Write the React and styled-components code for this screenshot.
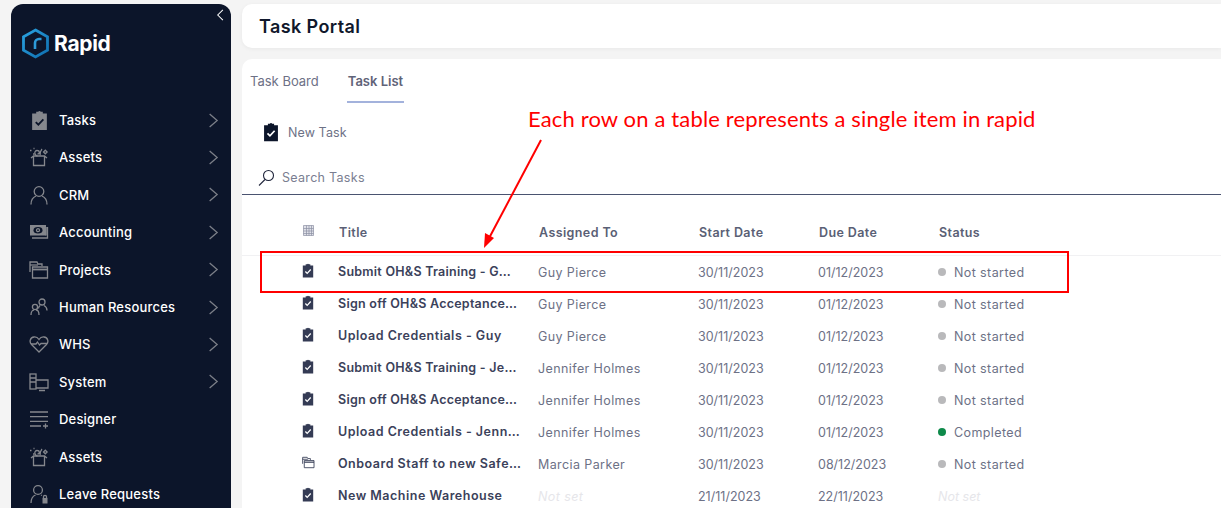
import React from "react";
import styled, { createGlobalStyle } from "styled-components";

const GlobalStyle = createGlobalStyle`
  html, body {
    margin: 0;
    height: 508px;
    overflow: hidden;
    background: #f4f4f4;
    font-family: "Inter", "Noto Sans", sans-serif;
  }
`;

const Page = styled.div`
  position: relative;
  display: flex;
  gap: 11px;
  width: 1221px;
  height: 508px;
  padding: 4px 0 0 11px;
  box-sizing: border-box;
  overflow: hidden;
`;

const Sidebar = styled.aside`
  position: relative;
  flex: 0 0 220px;
  height: 520px;
  background: #0c152a;
  border-radius: 12px 12px 0 0;
  box-sizing: border-box;
  padding: 24px 0 0 11px;
`;

const CollapseButton = styled.div`
  position: absolute;
  top: 5px;
  right: 6px;
  color: #ffffff;
  display: flex;
`;

const Logo = styled.div`
  display: flex;
  align-items: center;
  gap: 5px;
  height: 30px;
  color: #ffffff;
  font-size: 21px;
  font-weight: 700;
  letter-spacing: -0.3px;
`;

const Menu = styled.nav`
  display: flex;
  flex-direction: column;
  margin-top: 43.4px;
`;

const MenuItem = styled.div`
  display: flex;
  align-items: center;
  height: 37.4px;
  color: #ffffff;
  font-size: 13px;
  font-weight: 500;
  letter-spacing: 0.2px;
`;

const MenuIcon = styled.span`
  display: flex;
  justify-content: center;
  flex: 0 0 36px;
  margin-left: -1px;
  margin-right: 2px;
  color: #85878d;
`;

const MenuLabel = styled.span`
  flex: 1;
`;

const MenuArrow = styled.span`
  display: flex;
  margin-right: 12px;
  color: #7c7f88;
`;

const Main = styled.main`
  flex: 1;
  display: flex;
  flex-direction: column;
  gap: 11px;
  min-width: 0;
`;

const Header = styled.header`
  flex: 0 0 44px;
  display: flex;
  align-items: center;
  padding-left: 17px;
  background: #ffffff;
  border-radius: 10px 0 0 10px;
  box-shadow: 0 1px 4px rgba(0, 0, 0, 0.05);
`;

const Title = styled.h1`
  margin: 0;
  font-size: 18px;
  font-weight: 600;
  letter-spacing: 0.4px;
  color: #10182c;
`;

const Card = styled.section`
  flex: 1;
  background: #ffffff;
  border-radius: 10px 0 0 0;
`;

const Tabs = styled.div`
  display: flex;
  gap: 28px;
  height: 44px;
  padding-left: 8px;
`;

const Tab = styled.div`
  height: 44px;
  box-sizing: border-box;
  padding: 14px ${(p) => (p.$active ? "1px" : "0")} 0;
  font-size: 13px;
  line-height: 16px;
  font-weight: ${(p) => (p.$active ? 600 : 400)};
  color: ${(p) => (p.$active ? "#5f6378" : "#6d7186")};
  border-bottom: 2px solid ${(p) => (p.$active ? "#a3b2dc" : "transparent")};
`;

const NewTask = styled.div`
  display: flex;
  align-items: center;
  gap: 9px;
  height: 30px;
  margin-top: 14px;
  padding-left: 21px;
  font-size: 12.5px;
  letter-spacing: 0.1px;
  color: #6d7186;
`;

const Search = styled.div`
  display: flex;
  align-items: center;
  gap: 7px;
  height: 34px;
  margin-top: 14px;
  padding: 0 0 1px 16px;
  box-sizing: border-box;
  font-size: 12.5px;
  letter-spacing: 0.3px;
  color: #7a7e91;
  border-bottom: 1px solid #4a5370;
`;

const Table = styled.div`
  margin-top: 18px;
`;

const HeadRow = styled.div`
  display: grid;
  grid-template-columns: 97px 200px 160px 120px 120px 1fr;
  align-items: center;
  height: 43px;
  padding-bottom: 4px;
  box-sizing: border-box;
  font-size: 12.5px;
  font-weight: 600;
  letter-spacing: 0.4px;
  color: #5a5f75;
  border-bottom: 1px solid #f1f1f3;
`;

const Row = styled.div`
  display: grid;
  grid-template-columns: 96px 200px 160px 120px 120px 1fr;
  align-items: center;
  height: 32px;
  font-size: 12.5px;
  color: #6d7186;
`;

const IconCell = styled.div`
  display: flex;
  justify-content: center;
  padding-left: 36px;
  padding-bottom: 3px;
  color: #343b54;
`;

const ItemTitle = styled.div`
  white-space: nowrap;
  font-weight: 600;
  letter-spacing: ${(p) => (p.$tight ? "0.25px" : "0.5px")};
  color: #3b415a;
  padding-bottom: 1px;
`;

const Person = styled.div`
  letter-spacing: 0.4px;
`;

const NotSet = styled.span`
  font-style: italic;
  color: #e6e6ea;
`;

const StatusCell = styled.div`
  display: flex;
  align-items: center;
  gap: 8px;
  letter-spacing: 0.4px;
`;

const Dot = styled.span`
  width: 8px;
  height: 8px;
  border-radius: 50%;
  background: ${(p) => (p.$done ? "#0e8a4a" : "#b9b9bb")};
`;

const Note = styled.div`
  position: absolute;
  left: 528px;
  top: 105px;
  color: #ff0000;
  font-family: "Lato", sans-serif;
  font-size: 22px;
  line-height: 28px;
  letter-spacing: 0.15px;
  white-space: nowrap;
`;

const Highlight = styled.div`
  position: absolute;
  left: 260px;
  top: 251px;
  width: 809px;
  height: 42px;
  box-sizing: border-box;
  border: 2px solid #ff0000;
`;

const ArrowDrawing = styled.svg`
  position: absolute;
  left: 470px;
  top: 130px;
`;

const Clipboard = ({ size = 17, fill = "#85878d", check = "#0c152a" }) => (
  <svg width={size} height={size * 1.2} viewBox="0 0 15 18">
    <path d="M1 3h3.600V1.600h1.800a1.200 1.200 0 0 1 2.200 0h1.800V3H14v15H1z" fill={fill} />
    <path d="M4.200 10.600l2.300 2.400 4.400-4.800" fill="none" stroke={check} strokeWidth="1.600" />
  </svg>
);

const Stroke = ({ w = 20, h = 20, children }) => (
  <svg width={w} height={h} viewBox="0 0 20 20" fill="none" stroke="currentColor" strokeWidth="1.300">
    {children}
  </svg>
);

const AssetsIcon = () => (
  <Stroke>
    <path d="M2 11l2.500-2h11l2.500 2M4.500 9v9.500h11V9" />
    <path d="M8.500 9C5 8.500 5 3.500 8 3.500s3 3.500.5 3.500M11 8.500c0-2.500.5-5 2-6.500" />
    <path d="M14.500 5l1.800-1.800L18.100 5l-1.800 1.800zM1 3.500h1.500M4 7h1.500M4.500 1.500h1" />
  </Stroke>
);

const CrmIcon = () => (
  <Stroke>
    <circle cx="10" cy="6.500" r="4.800" />
    <path d="M2 19.500c0-5 2.500-7.500 5-8.500M18 19.500c0-5-2.500-7.500-5-8.500" />
  </Stroke>
);

const AccountingIcon = () => (
  <Stroke>
    <rect x="1" y="3" width="16" height="10.500" fill="currentColor" stroke="none" />
    <path d="M18.500 5v11H3M17 5v8.500" />
    <ellipse cx="9" cy="8.200" rx="4.500" ry="3.200" fill="#0c152a" stroke="none" />
    <circle cx="9" cy="8.200" r="1.500" />
  </Stroke>
);

const ProjectsIcon = ({ size = 20 }) => (
  <Stroke w={size} h={size}>
    <path d="M1 12V2h7l1 2h4v2" />
    <path d="M1 5h8" />
    <path d="M3.500 18V7h15v11z" />
    <path d="M3.500 9.500h15" strokeWidth="1.800" />
  </Stroke>
);

const PeopleIcon = () => (
  <Stroke>
    <circle cx="13" cy="5" r="3" />
    <circle cx="6" cy="10" r="2.600" />
    <path d="M2 18c0-3 1.500-5 3-5M10 18c0-3-1-5-3-5M11 8.500c-1 1-1.500 2-1.500 3M15 8.500c2 1 3 3 3 5" />
  </Stroke>
);

const HeartIcon = () => (
  <Stroke>
    <path d="M10 18L2.500 10.500C0 8 1 3.500 5 3c2.500-.3 4 1 5 2.500 1-1.500 2.500-2.800 5-2.500 4 .5 5 5 2.500 7.500z" />
    <path d="M2 10h5l1.500-2 2 3 1.500-1.500h6" />
  </Stroke>
);

const SystemIcon = () => (
  <Stroke>
    <rect x="1" y="2" width="6" height="15" />
    <path d="M1 6h6M1 10h6" />
    <path d="M7 8h12v8H7M10 18.500h6" />
  </Stroke>
);

const DesignerIcon = () => (
  <Stroke>
    <path d="M1 3h18M1 7.700h18M1 12.400h18M1 17h11M14 17h5M16.500 14.500v5" />
  </Stroke>
);

const LeaveIcon = () => (
  <Stroke>
    <circle cx="9" cy="6" r="4.400" />
    <path d="M2 19c0-5 2-7 4.500-8M12 11l1 .5" />
    <rect x="13.500" y="14" width="5" height="5.500" fill="currentColor" stroke="none" />
    <path d="M14.500 14v-1.200a1.500 1.500 0 0 1 3 0V14" />
  </Stroke>
);

const Chevron = ({ size = 14, dir = "right" }) => (
  <svg width={size * 0.72} height={size} viewBox="0 0 10 14" fill="none" stroke="currentColor" strokeWidth="1.200">
    <path d={dir === "right" ? "M1.500 1l7 6-7 6" : "M8 1L2 7l6 6"} />
  </svg>
);

const menu = [
  ["Tasks", <Clipboard key="i" />, true],
  ["Assets", <AssetsIcon key="i" />, true],
  ["CRM", <CrmIcon key="i" />, true],
  ["Accounting", <AccountingIcon key="i" />, true],
  ["Projects", <ProjectsIcon key="i" />, true],
  ["Human Resources", <PeopleIcon key="i" />, true],
  ["WHS", <HeartIcon key="i" />, true],
  ["System", <SystemIcon key="i" />, true],
  ["Designer", <DesignerIcon key="i" />, false],
  ["Assets", <AssetsIcon key="i" />, false],
  ["Leave Requests", <LeaveIcon key="i" />, false],
];

const GUY = "Guy Pierce";
const JEN = "Jennifer Holmes";

const rows = [
  ["Submit OH&S Training - G…", GUY, "30/11/2023", "01/12/2023", "Not started"],
  ["Sign off OH&S Acceptance…", GUY, "30/11/2023", "01/12/2023", "Not started"],
  ["Upload Credentials - Guy", GUY, "30/11/2023", "01/12/2023", "Not started"],
  ["Submit OH&S Training - Je…", JEN, "30/11/2023", "01/12/2023", "Not started"],
  ["Sign off OH&S Acceptance…", JEN, "30/11/2023", "01/12/2023", "Not started"],
  ["Upload Credentials - Jenn…", JEN, "30/11/2023", "01/12/2023", "Completed"],
  ["Onboard Staff to new Safe…", "Marcia Parker", "30/11/2023", "08/12/2023", "Not started"],
  ["New Machine Warehouse", null, "21/11/2023", "22/11/2023", null],
];

export default function App() {
  return (
    <Page>
      <GlobalStyle />
      <Sidebar>
        <CollapseButton>
          <Chevron size={12} dir="left" />
        </CollapseButton>
        <Logo>
          <svg width="27" height="31" viewBox="0 0 27 31" fill="none">
            <defs>
              <linearGradient id="hex" x1="0" y1="0" x2="1" y2="1">
                <stop offset="0" stopColor="#2aa2e0" />
                <stop offset="1" stopColor="#0f6fb0" />
              </linearGradient>
            </defs>
            <path d="M13.500 2L25.500 8.800v13.400L13.500 29 1.500 22.200V8.800z" stroke="url(#hex)" strokeWidth="2.800" />
            <path d="M13 21v-6a4 4 0 0 1 4-4h2.500" stroke="#2d9bd8" strokeWidth="2.600" />
          </svg>
          Rapid
        </Logo>
        <Menu>
          {menu.map(([label, icon, more], i) => (
            <MenuItem key={i}>
              <MenuIcon>{icon}</MenuIcon>
              <MenuLabel>{label}</MenuLabel>
              {more && (
                <MenuArrow>
                  <Chevron size={15} />
                </MenuArrow>
              )}
            </MenuItem>
          ))}
        </Menu>
      </Sidebar>
      <Main>
        <Header>
          <Title>Task Portal</Title>
        </Header>
        <Card>
          <Tabs>
            <Tab>Task Board</Tab>
            <Tab $active>Task List</Tab>
          </Tabs>
          <NewTask>
            <Clipboard size={16} fill="#0c152a" check="#ffffff" />
            New Task
          </NewTask>
          <Search>
            <svg width="17" height="17" viewBox="0 0 17 17" fill="none" stroke="#20263c" strokeWidth="1.100">
              <circle cx="10.500" cy="6.500" r="5" />
              <path d="M7 10.500L1 16.500" />
            </svg>
            Search Tasks
          </Search>
          <Table>
            <HeadRow>
              <IconCell>
                <svg width="11" height="11" viewBox="0 0 11 11" fill="#dfe0e8" stroke="#8d90a3" strokeWidth="0.700">
                  <path d="M.500.500h10v10H.500zM.500 3.500h10M.500 6h10M.500 8.500h10M3.500.500v10M6 .500v10M8.500.500v10" />
                </svg>
              </IconCell>
              <div>Title</div>
              <div>Assigned To</div>
              <div>Start Date</div>
              <div>Due Date</div>
              <div>Status</div>
            </HeadRow>
            {rows.map(([title, who, start, due, status], i) => (
              <Row key={i}>
                <IconCell>
                  {title.startsWith("Onboard") ? (
                    <ProjectsIcon size={13} />
                  ) : (
                    <Clipboard size={12} fill="#343b54" check="#ffffff" />
                  )}
                </IconCell>
                <ItemTitle $tight={title.includes("OH&S")}>{title}</ItemTitle>
                <Person>{who || <NotSet>Not set</NotSet>}</Person>
                <div>{start}</div>
                <div>{due}</div>
                {status ? (
                  <StatusCell>
                    <Dot $done={status === "Completed"} />
                    {status}
                  </StatusCell>
                ) : (
                  <NotSet>Not set</NotSet>
                )}
              </Row>
            ))}
          </Table>
        </Card>
      </Main>
      <Note>Each row on a table represents a single item in rapid</Note>
      <Highlight />
      <ArrowDrawing width="80" height="125" viewBox="0 0 80 125">
        <path d="M71 10L17 112" stroke="#ff0000" strokeWidth="2" />
        <path d="M14 118l1-15 9 5z" fill="#ff0000" />
      </ArrowDrawing>
    </Page>
  );
}
